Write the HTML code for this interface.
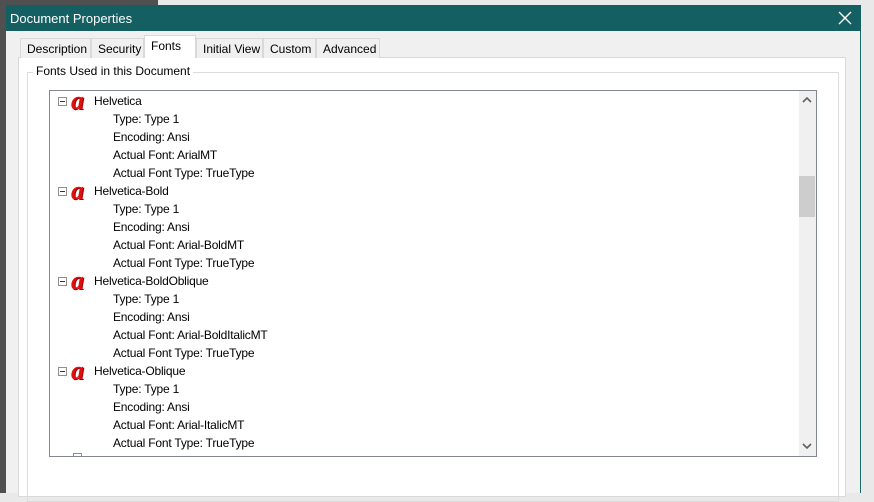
<!DOCTYPE html>
<html><head><meta charset="utf-8"><style>
*{margin:0;padding:0;box-sizing:border-box}
body{width:874px;height:493px;overflow:hidden;background:#e9e9e9;font-family:"Liberation Sans",sans-serif;font-size:12px;color:#000;position:relative}
.a{position:absolute}
.row{position:absolute;white-space:nowrap;font-size:12px;letter-spacing:-0.2px}
.ic{position:absolute;font-family:"Liberation Serif",serif;font-style:italic;font-weight:bold;color:#e01010;font-size:26px;line-height:16px;text-shadow:1px 1px 0 #900}
.mb{position:absolute;width:9px;height:9px;border:1px solid #8f8f8f;background:#fff}
.mb:after{content:"";position:absolute;left:1px;top:3px;width:5px;height:1px;background:#333}
.tab{position:absolute;top:38px;height:20px;border:1px solid #d9d9d9;border-bottom:none;background:#f0f0f0;font-size:12px;padding:3px 0 0 6px}
</style></head><body>
<div class="a" style="left:0;top:0;width:158px;height:6px;background:#505050"></div>
<div class="a" style="left:0;top:0;width:6px;height:493px;background:#505050"></div>
<div class="a" style="left:6px;top:5px;width:855px;height:488px;background:#f0f0f0;border-right:1px solid #1a6b6c"></div>
<div class="a" style="left:6px;top:5px;width:855px;height:26px;background:#135f61;color:#fff;font-size:13px;padding:6px 0 0 4px">Document Properties</div>
<svg class="a" style="left:838px;top:11px" width="14" height="14"><path d="M1 1L13 13M13 1L1 13" stroke="#fff" stroke-width="1.4"/></svg>
<div class="a" style="left:18px;top:57px;width:828px;height:440px;background:#fff;border:1px solid #d9d9d9"></div>
<div class="tab" style="left:20px;width:71px">Description</div>
<div class="tab" style="left:91px;width:53px">Security</div>
<div class="tab" style="left:144px;top:35px;height:23px;width:52px;background:#fff;border-color:#d9d9d9">Fonts</div>
<div class="tab" style="left:196px;width:67px">Initial View</div>
<div class="tab" style="left:263px;width:53px">Custom</div>
<div class="tab" style="left:316px;width:64px">Advanced</div>
<div class="a" style="left:27px;top:72px;width:812px;height:430px;border:1px solid #dcdcdc"></div>
<div class="a" style="left:33px;top:64px;background:#fff;padding:0 3px;font-size:12px">Fonts Used in this Document</div>
<div class="a" style="left:49px;top:90px;width:768px;height:367px;border:1px solid #828790;background:#fff;overflow:hidden">
<div class="a" style="left:749px;top:0;width:17px;height:365px;background:#f0f0f0"></div>
<div class="a" style="left:749px;top:85px;width:16px;height:41px;background:#cdcdcd"></div>
<svg class="a" style="left:752px;top:5px" width="10" height="8"><path d="M1 6L5 2L9 6" stroke="#606060" stroke-width="1.6" fill="none"/></svg>
<svg class="a" style="left:752px;top:351px" width="10" height="8"><path d="M1 2L5 6L9 2" stroke="#606060" stroke-width="1.6" fill="none"/></svg>
</div>
<div id="L"></div>
<script>
var f=[["Helvetica","ArialMT"],["Helvetica-Bold","Arial-BoldMT"],["Helvetica-BoldOblique","Arial-BoldItalicMT"],["Helvetica-Oblique","Arial-ItalicMT"]];
var h="";
f.forEach(function(x,i){var y=94+i*90;
h+='<div class="mb" style="left:58px;top:'+(y+3)+'px"></div><div class="ic" style="left:71px;top:'+(y-1)+'px">a</div>';
h+='<div class="row" style="left:94px;top:'+y+'px">'+x[0]+'</div>';
var p=["Type: Type 1","Encoding: Ansi","Actual Font: "+x[1],"Actual Font Type: TrueType"];
p.forEach(function(t,j){h+='<div class="row" style="left:113px;top:'+(y+18*(j+1))+'px">'+t+'</div>';});});
h+='<div class="a" style="left:73px;top:453px;width:9px;height:3px;border:1px solid #8f8f8f;border-bottom:none"></div>';
document.getElementById("L").innerHTML=h;
</script>
</body></html>
